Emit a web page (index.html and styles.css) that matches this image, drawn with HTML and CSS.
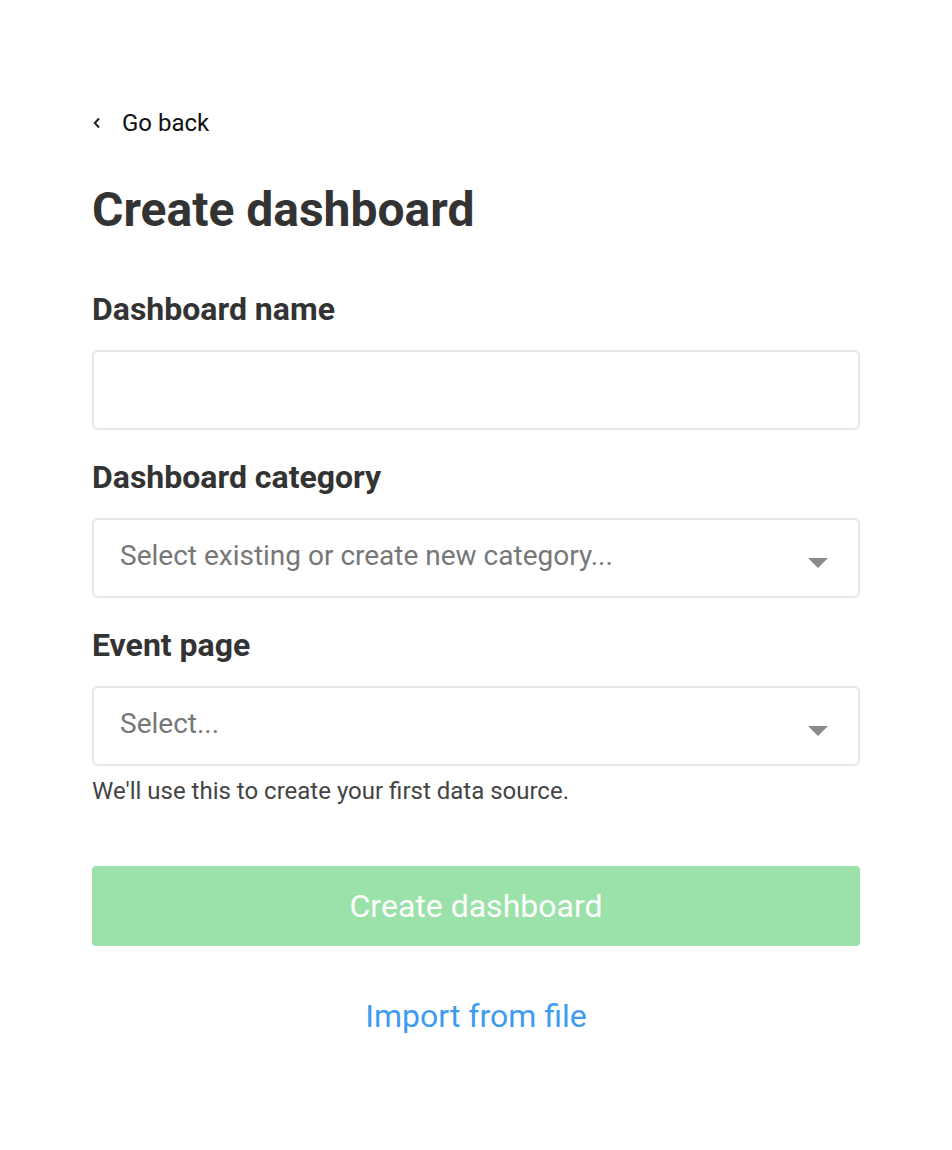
FILE: index.html
```html
<!DOCTYPE html>
<html lang="en">
<head>
<meta charset="utf-8">
<title>Create dashboard</title>
<link rel="stylesheet" href="styles.css">
</head>
<body>
<main class="page">
  <a class="back" href="#">
    <svg class="back-icon" width="10" height="14" viewBox="0 0 10 14"><path d="M7 2.5 L2.8 7 L7 11.5" fill="none" stroke="#222" stroke-width="2"/></svg>
    <span>Go back</span>
  </a>
  <h1 class="title">Create dashboard</h1>
  <form class="form">
    <label class="label" for="name">Dashboard name</label>
    <input class="field" id="name" type="text">
    <label class="label">Dashboard category</label>
    <div class="field select">
      <span class="placeholder">Select existing or create new category...</span>
      <span class="caret"></span>
    </div>
    <label class="label">Event page</label>
    <div class="field select">
      <span class="placeholder">Select...</span>
      <span class="caret"></span>
    </div>
    <p class="hint">We'll use this to create your first data source.</p>
    <button class="submit" type="button">Create dashboard</button>
    <a class="import" href="#">Import from file</a>
  </form>
</main>
</body>
</html>
```
FILE: styles.css
```css
* { box-sizing: border-box; }
html, body { margin: 0; background: #fff; }
body { font-family: Roboto, "Liberation Sans", sans-serif; color: #333; }
.page { width: 768px; margin: 0 0 0 92px; padding-top: 107px; }
.back { display: flex; align-items: center; gap: 20px; color: #111; text-decoration: none; font-size: 24px; line-height: 32px; height: 32px; }
.title { margin: 43px 0 0; font-size: 48px; font-weight: 700; line-height: 56px; color: #333; }
.form { display: flex; flex-direction: column; }
.label { display: block; margin-top: 52px; font-size: 32px; font-weight: 700; line-height: 38px; color: #333; }
.label ~ .label { margin-top: 28px; }
.field { margin-top: 22px; height: 80px; width: 100%; border: 2px solid #e6e6e6; border-radius: 6px; background: #fff; font: inherit; }
.select { display: flex; align-items: center; justify-content: space-between; padding: 0 30px 0 26px; }
.placeholder { font-size: 28px; line-height: 36px; color: #777; margin-bottom: 4px; }
.caret { width: 0; height: 0; border-left: 10px solid transparent; border-right: 10px solid transparent; border-top: 10px solid #8a8a8a; margin-top: 10px; }
.hint { margin: 9px 0 0; font-size: 24px; line-height: 32px; color: #444; }
.submit { margin-top: 59px; height: 80px; border: 0; border-radius: 4px; background: #9ae2a9; color: #fff; font: inherit; font-size: 32px; }
.import { align-self: center; margin-top: 50px; font-size: 32px; line-height: 40px; color: #3d9cf0; text-decoration: none; }
```
